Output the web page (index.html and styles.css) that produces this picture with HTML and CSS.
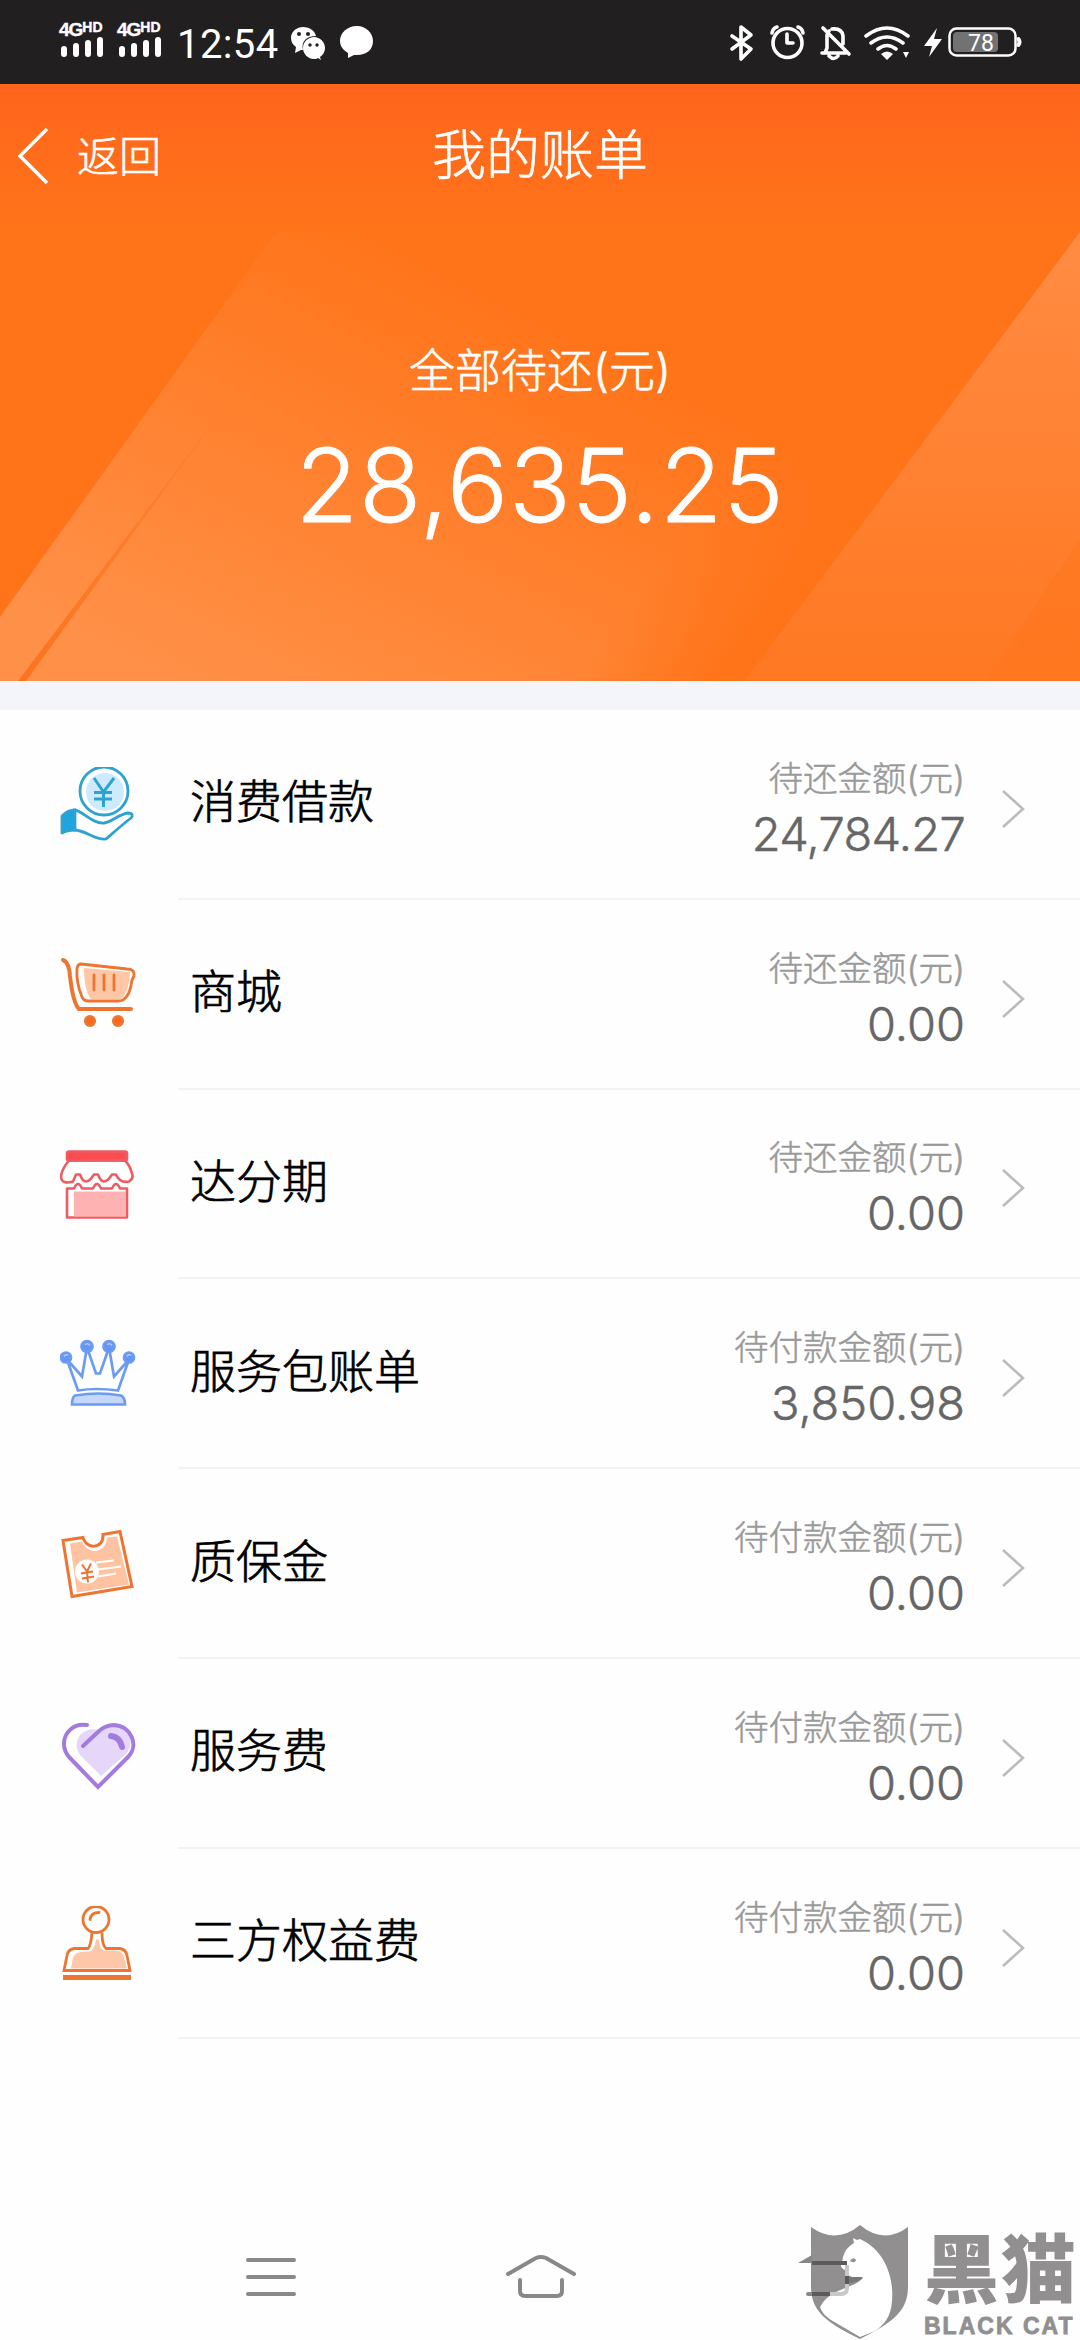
FILE: index.html
```html
<!DOCTYPE html>
<html lang="zh-CN">
<head>
<meta charset="utf-8">
<title>我的账单</title>
<link rel="stylesheet" href="styles.css">
</head>
<body>
<div class="status">
  <div class="sim"><div class="net">4G<span>HD</span></div><div class="bars"><i class="b1"></i><i class="b2"></i><i class="b3"></i><i class="b4"></i></div></div>
  <div class="sim"><div class="net">4G<span>HD</span></div><div class="bars"><i class="b1"></i><i class="b2"></i><i class="b3"></i><i class="b4"></i></div></div>
  <div class="clock">12:54</div>
  <svg class="chat" width="84" height="40" viewBox="290 24 84 40" fill="#fff">
    <path d="M303 27c-7 0-12 5-12 11 0 4 2 7 5 9l-1 6 6-3h2c-2-8 3-14 13-14-1-5-6-9-13-9z"/>
    <path d="M314 37c-6 0-11 5-11 11s5 11 11 11c1 0 3 0 4-1l3 2-1-3c3-2 5-5 5-9 0-6-5-11-11-11z"/>
    <circle cx="299" cy="34" r="2" fill="#211f20"/><circle cx="308" cy="34" r="2" fill="#211f20"/><circle cx="310" cy="45" r="1.7" fill="#211f20"/><circle cx="317" cy="45" r="1.7" fill="#211f20"/>
    <path d="M357 26c-10 0-17 7-17 15 0 5 3 9 8 12l0 5 6-3c12 1 19-5 19-14 0-8-7-15-16-15z"/>
  </svg>
  <svg class="sys" width="296" height="40" viewBox="726 22 296 40" fill="none" stroke="#fff" stroke-width="3.6" stroke-linecap="round" stroke-linejoin="round">
    <path d="M732 36l19 13-10 10V27l10 8-19 14"/>
    <circle cx="787.500" cy="43" r="14.500"/><path d="M787 34v9h6M772 33q1-5 5-6M803 33q-1-5-5-6"/>
    <path d="M822 53h24M825 53l2-5V36q0-4 2-5M832 29q10-1 11 7v8M829 56q5 5 9 0M823 28l26 26"/>
    <path d="M866 36q21-16 42 0M871 43q16-12 32 0M878 49q9-7 18 0" />
    <path d="M881 54q6-5 12 0l-6 6z" fill="#fff" stroke="none"/><path d="M903 52h6l-3 6z" fill="#fff" stroke="none"/>
    <path d="M937 28l-13 18h8l-3 11 13-18h-8z" fill="#fff" stroke="none"/>
    <rect x="953" y="32" width="45" height="20" rx="4" fill="#737273" stroke="none"/>
    <rect x="949.500" y="28.500" width="66" height="27" rx="7" stroke-width="2.500"/>
    <path d="M1018.500 39q2 3 0 6" stroke-width="4"/>
    <text x="968" y="51" class="bat">78</text>
  </svg>
</div>
<div class="hero">
  <svg class="shine" width="1080" height="597" viewBox="0 84 1080 597" preserveAspectRatio="none">
    <defs>
      <linearGradient id="a" gradientUnits="userSpaceOnUse" x1="190" y1="690" x2="415" y2="250"><stop offset="0" stop-color="#ff9550" stop-opacity=".85"/><stop offset="1" stop-color="#ff9550" stop-opacity="0"/></linearGradient>
      <linearGradient id="f" gradientUnits="userSpaceOnUse" x1="600" y1="648" x2="690" y2="715"><stop offset="0" stop-color="#ff7419" stop-opacity="0"/><stop offset="1" stop-color="#ff7419"/></linearGradient>
      <linearGradient id="b" gradientUnits="userSpaceOnUse" x1="1000" y1="250" x2="1000" y2="681"><stop offset="0" stop-color="#ff8b42"/><stop offset="1" stop-color="#ff7822"/></linearGradient>
      <linearGradient id="c" gradientUnits="userSpaceOnUse" x1="30" y1="670" x2="245" y2="380"><stop offset="0" stop-color="#fb7420"/><stop offset="1" stop-color="#fb7420" stop-opacity=".2"/></linearGradient>
    </defs>
    <path d="M0 617L276 232H1080L745 681H0z" fill="url(#a)"/>
    <path d="M520 681L855 232H1080L745 681z" fill="url(#f)"/>
    <path d="M745 681L1080 232V681z" fill="url(#b)"/>
    <path d="M18 681L232 397L26 681z" fill="url(#c)"/>
    <path d="M985 681L1080 540V681z" fill="#ff751b" opacity=".5"/>
  </svg>
  <div class="nav">
    <div class="back"><svg width="32" height="58" viewBox="0 0 32 58"><path d="M30 2L3 29L30 56" fill="none" stroke="#fff" stroke-width="3.500"/></svg><span>返回</span></div>
    <h1>我的账单</h1>
  </div>
  <div class="total-label">全部待还(元)</div>
  <div class="total">28,635.25</div>
</div>
<div class="gap"></div>
<div class="list">
  <div class="row">
    <svg class="ic" viewBox="60 765 76 76" fill="none" stroke="#2ea3d0" stroke-width="2.800" stroke-linejoin="round"><circle cx="104" cy="789" r="24" fill="#fff"/><circle cx="105" cy="790" r="19" fill="#cdeaff" stroke="none"/><path d="M94 776l9.500 14L114 776M103.500 790v15M94 790.500h18M94 797h18" stroke-width="3"/><path d="M74 808c8 0 18 14 30 13 8-1 15-9 24-10 5 0 5 3 3 5-8 6-18 15-25 21-10 2-20-9-32-9z" fill="#fff"/><path d="M62 814q6-6 13-6v20q-8 0-13 3z" fill="#1ea5de"/></svg>
    <div class="name">消费借款</div><div class="money"><div class="lab">待还金额(元)</div><div class="val long">24,784.27</div></div><svg class="go" viewBox="0 0 24 40"><path d="M2 2l20 18L2 38"/></svg>
  </div>
  <div class="row">
    <svg class="ic" viewBox="60 956 76 76" fill="none" stroke="#ed7532" stroke-width="2.800" stroke-linejoin="round" stroke-linecap="round"><path d="M81 963l46 5q8 0 7 7l-2 4q-2 16-9 20-2 1-5 1H88q-4 0-6-4-6-14-5-29 1-4 4-4z" fill="#fff"/><path d="M84 967l46 4q-1 20-9 27H91q-7-9-7-31z" fill="#ffc7a5" stroke="none"/><path d="M63 959q6 2 7 16 3 27 9 33h52" stroke-width="4"/><path d="M94 974v15M104 974v15M114 974v15" stroke-width="2.800"/><circle cx="90" cy="1020" r="4.700" fill="#fb671b"/><circle cx="118" cy="1020" r="4.700" fill="#fb671b"/></svg>
    <div class="name">商城</div><div class="money"><div class="lab">待还金额(元)</div><div class="val">0.00</div></div><svg class="go" viewBox="0 0 24 40"><path d="M2 2l20 18L2 38"/></svg>
  </div>
  <div class="row">
    <svg class="ic" viewBox="60 1145.500 76 76" fill="none" stroke="#ed5c62" stroke-width="2.600" stroke-linejoin="round"><path d="M67 1188h7q4-9 8 0h11q4-9 8 0h11q4-9 8 0h7v29H67z" fill="#fff"/><path d="M74 1191h52v25H74z" fill="#ffb2b2" stroke="none"/><path d="M69 1160q-7 8-8 16c0 6 6 7 12 5l3-7h4q5 14 14 0h4q5 14 14 0h4q4 9 13 7 5-3 3-8-2-8-7-13z" fill="#fff"/><rect x="67" y="1151" width="60" height="9" rx="2" fill="#fc4c52"/></svg>
    <div class="name">达分期</div><div class="money"><div class="lab">待还金额(元)</div><div class="val">0.00</div></div><svg class="go" viewBox="0 0 24 40"><path d="M2 2l20 18L2 38"/></svg>
  </div>
  <div class="row">
    <svg class="ic" viewBox="60 1335.500 76 76" fill="none" stroke="#6c9bf2" stroke-width="2.700"><path d="M67 1359l15 17 5-29 9 26h4l9-26 5 29 15-17-11 31q-22-3-40 0z" fill="#fff"/><path d="M75 1395q24-4 46 0 4 2 4 9H72q0-7 3-9z" fill="#c5d7fc"/><g fill="#6395f5"><circle cx="66" cy="1357" r="5"/><circle cx="87" cy="1346" r="5.500"/><circle cx="109" cy="1346" r="5.500"/><circle cx="129" cy="1357" r="5"/></g><path d="M64 1356q2-3 4-1M85 1344q3-2 5 1M107 1344q3-2 5 1M127 1356q2-3 4-1" stroke="#b3cafa" stroke-width="1.500"/></svg>
    <div class="name">服务包账单</div><div class="money"><div class="lab">待付款金额(元)</div><div class="val">3,850.98</div></div><svg class="go" viewBox="0 0 24 40"><path d="M2 2l20 18L2 38"/></svg>
  </div>
  <div class="row">
    <svg class="ic" viewBox="60 1525.500 76 76" fill="none" stroke="#ed7532" stroke-width="3"><path d="M63 1540l20-3c3 12 21 12 20-3l17-3 12 55-60 10z" fill="#fff"/><path d="M70 1543l12-2c6 14 24 12 25-4l10-1 12 48-52 8z" fill="#ffc3a2" stroke="none"/><g stroke="#fff" stroke-width="2"><circle cx="87" cy="1571" r="11" fill="#fff"/><path d="M96 1562l18-2M98 1569l23-3M98 1576l18-3"/></g><path d="M82 1564l5 7 4-8M87 1571l1 11M81 1573l12-2M82 1578l12-2" stroke-width="2"/></svg>
    <div class="name">质保金</div><div class="money"><div class="lab">待付款金额(元)</div><div class="val">0.00</div></div><svg class="go" viewBox="0 0 24 40"><path d="M2 2l20 18L2 38"/></svg>
  </div>
  <div class="row">
    <svg class="ic" viewBox="60 1716 76 76" fill="none" stroke="#a27bdd" stroke-width="4" stroke-linecap="round"><path d="M101 1776L80 1755q-7-10 0-20 8-8 20-5 20-8 28 3 6 10-1 20z" fill="#e5d6fa" stroke="none"/><path d="M87 1725c-14-2-23 8-23 19 0 6 2 10 6 14l28 29 30-30c11-11 4-31-14-32-7 0-11 2-16 7l-15 14"/><path d="M111 1736q9 1 11 11" stroke-width="6"/></svg>
    <div class="name">服务费</div><div class="money"><div class="lab">待付款金额(元)</div><div class="val">0.00</div></div><svg class="go" viewBox="0 0 24 40"><path d="M2 2l20 18L2 38"/></svg>
  </div>
  <div class="row">
    <svg class="ic" viewBox="60 1905.500 76 76" fill="none" stroke="#ed7532" stroke-width="2.800"><path d="M92 1932q-1 13-4 16H74q-6 1-7 7l-3 15h66l-3-15q-1-6-7-7h-14q-4-3-4-16" fill="#fff"/><path d="M96 1939q-1 9-6 12-15-1-17 6l-2 11h56l-3-11q-1-6-8-7h-12q-5-2-5-11z" fill="#ffc7a9" stroke="none"/><circle cx="96" cy="1919" r="13" fill="#fff"/><path d="M90 1919q1-7 9-7" stroke-linecap="round"/><path d="M63 1977h68" stroke-width="5"/></svg>
    <div class="name">三方权益费</div><div class="money"><div class="lab">待付款金额(元)</div><div class="val">0.00</div></div><svg class="go" viewBox="0 0 24 40"><path d="M2 2l20 18L2 38"/></svg>
  </div>
</div>
<div class="bottom">
  <svg class="keys" width="330" height="50" viewBox="246 2252 330 50" fill="none" stroke="#888" stroke-width="4" stroke-linecap="round" stroke-linejoin="round"><path d="M248 2260h46M248 2277h46M248 2294h46M508 2274l28-16q5-2 10 0l28 16M520 2280v11q0 5 5 5h32q5 0 5-5v-11"/></svg>
  <div class="mark">
    <svg class="shield" width="112" height="116" viewBox="797 2224 112 116"><path d="M811 2227q25 18 49-2 24 20 48 2v60c0 28-22 38-48 52-27-14-49-24-49-52z" fill="#918f90"/><path d="M853 2238l4 2 3-1c26 12 34 40 32 62-1 16-8 24-17 30l-15 6-29-17q-9-6-11-13c11-20 32-17 43-29-9 0-15-1-16-6l-2-2c-4-2-5-4-3-7 1-7 2-14 12-20z" fill="#fff"/><path d="M850 2261q3-5 6-1-1 4-6 1z" fill="#918f90"/><path d="M798 2263l14-8v8z" fill="#888"/><path d="M808 2294h5" stroke="#888" stroke-width="4" stroke-linecap="round"/><path d="M812 2263h35M812 2294h18" stroke="#5c5b5b" stroke-width="4"/><path d="M847 2277h16q-5 6-16 6z" fill="#777"/><path d="M847 2265v23q0 6-6 6h-11" fill="none" stroke="#c8c8c8" stroke-width="4"/><path d="M847 2276v8" stroke="#5c5b5b" stroke-width="4"/></svg>
    <div class="brand"><div class="cn">黑猫</div><div class="en">BLACK CAT</div></div>
  </div>
</div>
</body>
</html>
```
FILE: styles.css
```css
* { box-sizing: border-box; }
body { margin: 0; width: 1080px; height: 2340px; overflow: hidden; background: #fefefe; font-family: Inter, "Noto Sans CJK SC", sans-serif; font-weight: 300; display: flex; flex-direction: column; }
svg { display: block; flex: none; }
.status { height: 84px; background: #211f20; color: #fff; display: flex; align-items: flex-start; padding-left: 59px; flex: none; }
.sim { width: 58px; padding-top: 21px; }
.net { font: 700 19px/18px "Liberation Sans", sans-serif; white-space: nowrap; display: flex; letter-spacing: -1px; -webkit-text-stroke: .4px #fff; }
.net span { font-size: 14px; line-height: 13px; letter-spacing: 0; }
.bars { display: flex; gap: 6px; align-items: flex-end; height: 18px; padding-left: 2px; }
.bars i { width: 6px; background: #fff; border-radius: 3px; }
.b1 { height: 11px; }
.b2 { height: 14px; }
.b3 { height: 17px; }
.b4 { height: 20px; }
.clock { font: 400 40px/48px Roboto, sans-serif; width: 115px; padding: 21px 0 0 2px; letter-spacing: .4px; }
.chat { margin-top: 24px; }
.sys { margin: 22px 58px 0 auto; }
.bat { font: 400 23px Roboto, sans-serif; fill: #fff; stroke: none; }
.hero { height: 597px; position: relative; flex: none; background: linear-gradient(#ff651d, #ff7419 25%); color: #fff; text-align: center; }
.shine { position: absolute; inset: 0; }
.nav { position: relative; height: 144px; display: grid; grid-template-columns: 1fr auto 1fr; align-items: center; -webkit-text-stroke: .6px #fff; }
.back { display: flex; align-items: center; gap: 28px; padding-left: 17px; font-size: 42px; }
.back span { padding-bottom: 5px; }
h1 { margin: 0; font-size: 54px; line-height: 70px; font-weight: 300; }
.total-label { position: relative; font-size: 46px; line-height: 60px; margin-top: 112px; -webkit-text-stroke: .6px #fff; }
.total { position: relative; font-size: 102px; line-height: 120px; margin-top: 25px; letter-spacing: .8px; -webkit-text-stroke: .8px #fff; }
.gap { height: 29px; background: #f4f5fb; flex: none; }
.list { flex: none; }
.row { height: 189.800px; position: relative; display: flex; align-items: center; padding: 0 55px 0 60px; }
.row::after { content: ""; position: absolute; left: 178px; right: 0; bottom: 0; height: 2px; background: #f3f3f4; }
.ic { width: 76px; height: 76px; margin-right: 54px; }
.name { font-size: 46px; color: #000; line-height: 60px; padding-bottom: 7px; -webkit-text-stroke: .7px #000; }
.money { margin-left: auto; text-align: right; padding-top: 10px; }
.lab { color: #999; font-size: 34.500px; line-height: 48px; -webkit-text-stroke: .5px #999; }
.val { color: #666; font-size: 47px; line-height: 62px; -webkit-text-stroke: .5px #666; }
.long { letter-spacing: -.7px; }
.go { width: 24px; height: 40px; margin: 8px 0 0 36px; fill: none; stroke: #bbb; stroke-width: 2.500; }
.bottom { flex: 1; display: flex; align-items: flex-end; justify-content: space-between; padding-left: 246px; }
.keys { margin-bottom: 38px; }
.mark { display: flex; align-items: flex-end; color: #918f90; width: 283px; gap: 15px; }
.brand { height: 118px; }
.cn { font: 900 75px/86px "Noto Sans CJK SC", sans-serif; white-space: nowrap; letter-spacing: 2px; }
.en { font: 700 23px/24px "Liberation Sans", sans-serif; white-space: nowrap; letter-spacing: 2px; margin-top: 6px; -webkit-text-stroke: .8px #918f90; }
```
